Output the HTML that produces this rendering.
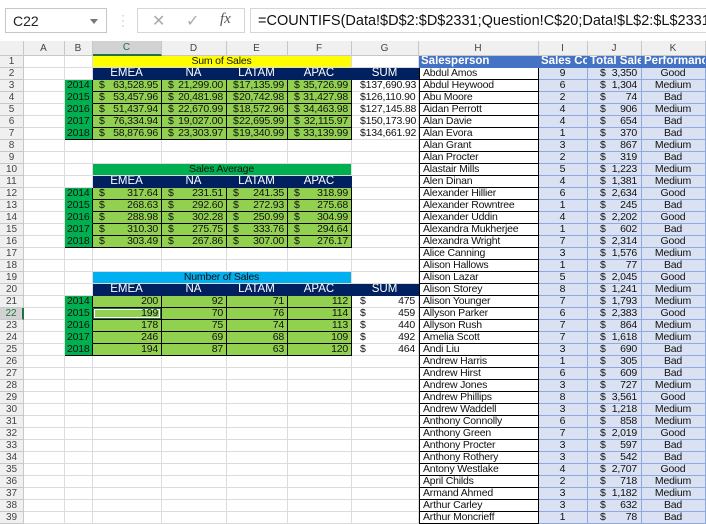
<!DOCTYPE html>
<html><head><meta charset="utf-8"><style>
*{margin:0;padding:0;box-sizing:border-box}
body{width:706px;height:521px;overflow:hidden;background:#fff;font-family:"Liberation Sans",Arial,sans-serif;position:relative}
.top{position:absolute;left:0;top:0;width:706px;height:41px;background:#fff}
.nb{position:absolute;left:5px;top:8px;width:102px;height:25px;border:1px solid #c6c6c6;font-size:14px;padding:4px 7px;color:#222}
.nb i{position:absolute;right:8px;top:10px;border-left:4px solid transparent;border-right:4px solid transparent;border-top:5px solid #777}
.dots{position:absolute;left:121px;top:13px;color:#bbb;font-size:12px;line-height:5px}
.fxb{position:absolute;left:137px;top:8px;width:108px;height:25px;border:1px solid #d6d6d6;color:#aaa;font-size:16px}
.fxb span{position:absolute;top:2px}
.fm{position:absolute;left:250px;top:8px;width:470px;height:25px;border:1px solid #d6d6d6;font-size:14.5px;padding:4px 7px;color:#111;white-space:nowrap;overflow:hidden}
table{position:absolute;left:0;top:41px;width:706px;border-collapse:separate;border-spacing:0;table-layout:fixed;font-size:10.5px;letter-spacing:-0.2px}
td{height:12px;line-height:11px;border-right:1px solid #dcdcdc;border-bottom:1px solid #dcdcdc;white-space:nowrap;overflow:hidden;padding:0 3px 0 2px;color:#111}
tr.h td{height:15px;background:#f0f0f0;text-align:center;font-size:10px;color:#444;border-color:#c8c8c8;letter-spacing:0}
td.rh{background:#f0f0f0;text-align:center;font-size:10px;color:#444;border-color:#c8c8c8;padding:0;letter-spacing:0}
.ttl{text-align:center;border-right:1px solid #dcdcdc}
.yel{background:#ffff00}.grn{background:#00b050}.cy{background:#00b0f0}
.nv{background:#002060;color:#fff;text-align:center;font-size:11.5px;border-color:#002060;letter-spacing:0}
.y{background:#00b050;text-align:right;border-right:1px solid #000;border-bottom-color:#00b050}
.g{background:#92d050;border-right:1px solid #000;border-bottom:1px solid #000;text-align:right}
.d b{float:left;font-weight:normal;padding-left:4px}
.s{text-align:right}
.s b{padding-left:6px}
.H{border-right:1px solid #000;border-bottom:1px solid #000;padding-left:3px;border-left:1px solid #000}
.L{background:#d9e1f2;border-right:1px solid #8ea9db;border-bottom:1px solid #8ea9db;text-align:center}
.Lj{background:#d9e1f2;border-right:1px solid #8ea9db;border-bottom:1px solid #8ea9db;text-align:right;padding-right:4px}
.Lj b{float:left;font-weight:normal;padding-left:10px}
.bh{background:#4472c4;color:#fff;font-weight:bold;font-size:11.5px;border-color:#4472c4;letter-spacing:0}
.sel{box-shadow:inset 0 0 0 1px #217346,inset 0 0 0 2px #fff;position:relative}
</style></head><body>
<div class="top">
<div class="nb">C22<i></i></div>
<div class="dots">·<br>·<br>·</div>
<div class="fxb"><span style="left:14px">✕</span><span style="left:48px">✓</span><span style="left:82px;font-style:italic;font-family:'Liberation Serif',serif;color:#555;font-size:15px">fx</span></div>
<div class="fm">=COUNTIFS(Data!$D$2:$D$2331;Question!C$20;Data!$L$2:$L$2331;Question!</div>
</div>
<table>
<colgroup><col style="width:24px"><col style="width:41px"><col style="width:28px"><col style="width:69px"><col style="width:65px"><col style="width:61px"><col style="width:64px"><col style="width:67px"><col style="width:120px"><col style="width:49px"><col style="width:54px"><col style="width:64px"></colgroup>
<tr class="h"><td></td><td>A</td><td>B</td><td style="background:#d2d2d2;color:#217346;border-bottom:2px solid #217346">C</td><td>D</td><td>E</td><td>F</td><td>G</td><td>H</td><td>I</td><td>J</td><td>K</td></tr>
<tr><td class="rh">1</td><td></td><td></td><td colspan="4" class="ttl yel">Sum of Sales</td><td></td><td class="bh">Salesperson</td><td class="bh">Sales Count</td><td class="bh">Total Sales</td><td class="bh">Performance</td></tr>
<tr><td class="rh">2</td><td></td><td></td><td class="nv">EMEA</td><td class="nv">NA</td><td class="nv">LATAM</td><td class="nv">APAC</td><td class="nv">SUM</td><td class="H">Abdul Amos</td><td class="L">9</td><td class="Lj"><b>$</b>3,350</td><td class="L">Good</td></tr>
<tr><td class="rh">3</td><td></td><td class="y">2014</td><td class="g d"><b>$</b>63,528.95</td><td class="g d"><b>$</b>21,299.00</td><td class="g d"><b>$</b>17,135.99</td><td class="g d"><b>$</b>35,726.99</td><td class="d s"><b>$</b>137,690.93</td><td class="H">Abdul Heywood</td><td class="L">6</td><td class="Lj"><b>$</b>1,304</td><td class="L">Medium</td></tr>
<tr><td class="rh">4</td><td></td><td class="y">2015</td><td class="g d"><b>$</b>53,457.96</td><td class="g d"><b>$</b>20,481.98</td><td class="g d"><b>$</b>20,742.98</td><td class="g d"><b>$</b>31,427.98</td><td class="d s"><b>$</b>126,110.90</td><td class="H">Abu Moore</td><td class="L">2</td><td class="Lj"><b>$</b>74</td><td class="L">Bad</td></tr>
<tr><td class="rh">5</td><td></td><td class="y">2016</td><td class="g d"><b>$</b>51,437.94</td><td class="g d"><b>$</b>22,670.99</td><td class="g d"><b>$</b>18,572.96</td><td class="g d"><b>$</b>34,463.98</td><td class="d s"><b>$</b>127,145.88</td><td class="H">Aidan Perrott</td><td class="L">4</td><td class="Lj"><b>$</b>906</td><td class="L">Medium</td></tr>
<tr><td class="rh">6</td><td></td><td class="y">2017</td><td class="g d"><b>$</b>76,334.94</td><td class="g d"><b>$</b>19,027.00</td><td class="g d"><b>$</b>22,695.99</td><td class="g d"><b>$</b>32,115.97</td><td class="d s"><b>$</b>150,173.90</td><td class="H">Alan Davie</td><td class="L">4</td><td class="Lj"><b>$</b>654</td><td class="L">Bad</td></tr>
<tr><td class="rh">7</td><td></td><td class="y" style="border-bottom-color:#000">2018</td><td class="g d"><b>$</b>58,876.96</td><td class="g d"><b>$</b>23,303.97</td><td class="g d"><b>$</b>19,340.99</td><td class="g d"><b>$</b>33,139.99</td><td class="d s"><b>$</b>134,661.92</td><td class="H">Alan Evora</td><td class="L">1</td><td class="Lj"><b>$</b>370</td><td class="L">Bad</td></tr>
<tr><td class="rh">8</td><td></td><td></td><td></td><td></td><td></td><td></td><td></td><td class="H">Alan Grant</td><td class="L">3</td><td class="Lj"><b>$</b>867</td><td class="L">Medium</td></tr>
<tr><td class="rh">9</td><td></td><td></td><td></td><td></td><td></td><td></td><td></td><td class="H">Alan Procter</td><td class="L">2</td><td class="Lj"><b>$</b>319</td><td class="L">Bad</td></tr>
<tr><td class="rh">10</td><td></td><td></td><td colspan="4" class="ttl grn">Sales Average</td><td></td><td class="H">Alastair Mills</td><td class="L">5</td><td class="Lj"><b>$</b>1,223</td><td class="L">Medium</td></tr>
<tr><td class="rh">11</td><td></td><td></td><td class="nv">EMEA</td><td class="nv">NA</td><td class="nv">LATAM</td><td class="nv">APAC</td><td></td><td class="H">Alen Dinan</td><td class="L">4</td><td class="Lj"><b>$</b>1,381</td><td class="L">Medium</td></tr>
<tr><td class="rh">12</td><td></td><td class="y">2014</td><td class="g d"><b>$</b>317.64</td><td class="g d"><b>$</b>231.51</td><td class="g d"><b>$</b>241.35</td><td class="g d"><b>$</b>318.99</td><td></td><td class="H">Alexander Hillier</td><td class="L">6</td><td class="Lj"><b>$</b>2,634</td><td class="L">Good</td></tr>
<tr><td class="rh">13</td><td></td><td class="y">2015</td><td class="g d"><b>$</b>268.63</td><td class="g d"><b>$</b>292.60</td><td class="g d"><b>$</b>272.93</td><td class="g d"><b>$</b>275.68</td><td></td><td class="H">Alexander Rowntree</td><td class="L">1</td><td class="Lj"><b>$</b>245</td><td class="L">Bad</td></tr>
<tr><td class="rh">14</td><td></td><td class="y">2016</td><td class="g d"><b>$</b>288.98</td><td class="g d"><b>$</b>302.28</td><td class="g d"><b>$</b>250.99</td><td class="g d"><b>$</b>304.99</td><td></td><td class="H">Alexander Uddin</td><td class="L">4</td><td class="Lj"><b>$</b>2,202</td><td class="L">Good</td></tr>
<tr><td class="rh">15</td><td></td><td class="y">2017</td><td class="g d"><b>$</b>310.30</td><td class="g d"><b>$</b>275.75</td><td class="g d"><b>$</b>333.76</td><td class="g d"><b>$</b>294.64</td><td></td><td class="H">Alexandra Mukherjee</td><td class="L">1</td><td class="Lj"><b>$</b>602</td><td class="L">Bad</td></tr>
<tr><td class="rh">16</td><td></td><td class="y" style="border-bottom-color:#000">2018</td><td class="g d"><b>$</b>303.49</td><td class="g d"><b>$</b>267.86</td><td class="g d"><b>$</b>307.00</td><td class="g d"><b>$</b>276.17</td><td></td><td class="H">Alexandra Wright</td><td class="L">7</td><td class="Lj"><b>$</b>2,314</td><td class="L">Good</td></tr>
<tr><td class="rh">17</td><td></td><td></td><td></td><td></td><td></td><td></td><td></td><td class="H">Alice Canning</td><td class="L">3</td><td class="Lj"><b>$</b>1,576</td><td class="L">Medium</td></tr>
<tr><td class="rh">18</td><td></td><td></td><td></td><td></td><td></td><td></td><td></td><td class="H">Alison Hallows</td><td class="L">1</td><td class="Lj"><b>$</b>77</td><td class="L">Bad</td></tr>
<tr><td class="rh">19</td><td></td><td></td><td colspan="4" class="ttl cy">Number of Sales</td><td></td><td class="H">Alison Lazar</td><td class="L">5</td><td class="Lj"><b>$</b>2,045</td><td class="L">Good</td></tr>
<tr><td class="rh">20</td><td></td><td></td><td class="nv">EMEA</td><td class="nv">NA</td><td class="nv">LATAM</td><td class="nv">APAC</td><td class="nv">SUM</td><td class="H">Alison Storey</td><td class="L">8</td><td class="Lj"><b>$</b>1,241</td><td class="L">Medium</td></tr>
<tr><td class="rh">21</td><td></td><td class="y">2014</td><td class="g">200</td><td class="g">92</td><td class="g">71</td><td class="g">112</td><td class="d s"><b>$</b>475</td><td class="H">Alison Younger</td><td class="L">7</td><td class="Lj"><b>$</b>1,793</td><td class="L">Medium</td></tr>
<tr><td class="rh" style="background:#d2d2d2;color:#217346;border-right:2px solid #217346">22</td><td></td><td class="y">2015</td><td class="g sel">199</td><td class="g">70</td><td class="g">76</td><td class="g">114</td><td class="d s"><b>$</b>459</td><td class="H">Allyson Parker</td><td class="L">6</td><td class="Lj"><b>$</b>2,383</td><td class="L">Good</td></tr>
<tr><td class="rh">23</td><td></td><td class="y">2016</td><td class="g">178</td><td class="g">75</td><td class="g">74</td><td class="g">113</td><td class="d s"><b>$</b>440</td><td class="H">Allyson Rush</td><td class="L">7</td><td class="Lj"><b>$</b>864</td><td class="L">Medium</td></tr>
<tr><td class="rh">24</td><td></td><td class="y">2017</td><td class="g">246</td><td class="g">69</td><td class="g">68</td><td class="g">109</td><td class="d s"><b>$</b>492</td><td class="H">Amelia Scott</td><td class="L">7</td><td class="Lj"><b>$</b>1,618</td><td class="L">Medium</td></tr>
<tr><td class="rh">25</td><td></td><td class="y" style="border-bottom-color:#000">2018</td><td class="g">194</td><td class="g">87</td><td class="g">63</td><td class="g">120</td><td class="d s"><b>$</b>464</td><td class="H">Andi Liu</td><td class="L">3</td><td class="Lj"><b>$</b>690</td><td class="L">Bad</td></tr>
<tr><td class="rh">26</td><td></td><td></td><td></td><td></td><td></td><td></td><td></td><td class="H">Andrew Harris</td><td class="L">1</td><td class="Lj"><b>$</b>305</td><td class="L">Bad</td></tr>
<tr><td class="rh">27</td><td></td><td></td><td></td><td></td><td></td><td></td><td></td><td class="H">Andrew Hirst</td><td class="L">6</td><td class="Lj"><b>$</b>609</td><td class="L">Bad</td></tr>
<tr><td class="rh">28</td><td></td><td></td><td></td><td></td><td></td><td></td><td></td><td class="H">Andrew Jones</td><td class="L">3</td><td class="Lj"><b>$</b>727</td><td class="L">Medium</td></tr>
<tr><td class="rh">29</td><td></td><td></td><td></td><td></td><td></td><td></td><td></td><td class="H">Andrew Phillips</td><td class="L">8</td><td class="Lj"><b>$</b>3,561</td><td class="L">Good</td></tr>
<tr><td class="rh">30</td><td></td><td></td><td></td><td></td><td></td><td></td><td></td><td class="H">Andrew Waddell</td><td class="L">3</td><td class="Lj"><b>$</b>1,218</td><td class="L">Medium</td></tr>
<tr><td class="rh">31</td><td></td><td></td><td></td><td></td><td></td><td></td><td></td><td class="H">Anthony Connolly</td><td class="L">6</td><td class="Lj"><b>$</b>858</td><td class="L">Medium</td></tr>
<tr><td class="rh">32</td><td></td><td></td><td></td><td></td><td></td><td></td><td></td><td class="H">Anthony Green</td><td class="L">7</td><td class="Lj"><b>$</b>2,019</td><td class="L">Good</td></tr>
<tr><td class="rh">33</td><td></td><td></td><td></td><td></td><td></td><td></td><td></td><td class="H">Anthony Procter</td><td class="L">3</td><td class="Lj"><b>$</b>597</td><td class="L">Bad</td></tr>
<tr><td class="rh">34</td><td></td><td></td><td></td><td></td><td></td><td></td><td></td><td class="H">Anthony Rothery</td><td class="L">3</td><td class="Lj"><b>$</b>542</td><td class="L">Bad</td></tr>
<tr><td class="rh">35</td><td></td><td></td><td></td><td></td><td></td><td></td><td></td><td class="H">Antony Westlake</td><td class="L">4</td><td class="Lj"><b>$</b>2,707</td><td class="L">Good</td></tr>
<tr><td class="rh">36</td><td></td><td></td><td></td><td></td><td></td><td></td><td></td><td class="H">April Childs</td><td class="L">2</td><td class="Lj"><b>$</b>718</td><td class="L">Medium</td></tr>
<tr><td class="rh">37</td><td></td><td></td><td></td><td></td><td></td><td></td><td></td><td class="H">Armand Ahmed</td><td class="L">3</td><td class="Lj"><b>$</b>1,182</td><td class="L">Medium</td></tr>
<tr><td class="rh">38</td><td></td><td></td><td></td><td></td><td></td><td></td><td></td><td class="H">Arthur Carley</td><td class="L">3</td><td class="Lj"><b>$</b>632</td><td class="L">Bad</td></tr>
<tr><td class="rh">39</td><td></td><td></td><td></td><td></td><td></td><td></td><td></td><td class="H">Arthur Moncrieff</td><td class="L">1</td><td class="Lj"><b>$</b>78</td><td class="L">Bad</td></tr>
</table>
</body></html>
